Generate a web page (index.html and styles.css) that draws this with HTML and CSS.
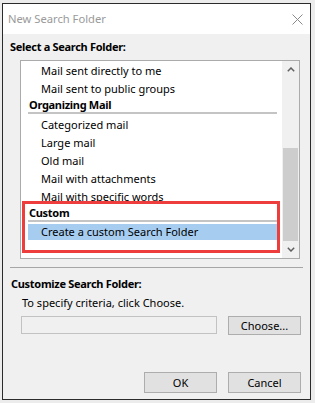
FILE: index.html
```html
<!DOCTYPE html>
<html>
<head>
<meta charset="utf-8">
<link rel="stylesheet" href="styles.css">
</head>
<body>
<div class="window">
  <div class="titlebar">
    <span class="title">New Search Folder</span>
    <svg class="close" width="11" height="11" viewBox="0 0 11 11"><path d="M0.5 0.5 L10.5 10.5 M10.5 0.5 L0.5 10.5" stroke="#8a8a8a" stroke-width="1" fill="none"/></svg>
  </div>
  <div class="content">
    <div class="label bold">Select a Search Folder:</div>
    <div class="list">
      <div class="items">
        <div class="item">Mail sent directly to me</div>
        <div class="item">Mail sent to public groups</div>
        <div class="heading">Organizing Mail</div>
        <div class="item">Categorized mail</div>
        <div class="item">Large mail</div>
        <div class="item">Old mail</div>
        <div class="item">Mail with attachments</div>
        <div class="item">Mail with specific words</div>
        <div class="heading">Custom</div>
        <div class="item selected">Create a custom Search Folder</div>
      </div>
      <div class="scrollbar">
        <div class="sb-btn"><svg width="8" height="5" viewBox="0 0 8 5"><path d="M0.8 4.2 L4 1 L7.2 4.2" stroke="#606060" stroke-width="1.5" fill="none"/></svg></div>
        <div class="sb-track"><div class="sb-thumb"></div></div>
        <div class="sb-btn"><svg width="8" height="5" viewBox="0 0 8 5"><path d="M0.8 0.8 L4 4 L7.2 0.8" stroke="#606060" stroke-width="1.5" fill="none"/></svg></div>
      </div>
      <div class="highlight-box"></div>
    </div>
    <div class="separator"></div>
    <div class="label bold section">Customize Search Folder:</div>
    <div class="hint">To specify criteria, click Choose.</div>
    <div class="choose-row">
      <div class="textbox"></div>
      <div class="button">Choose...</div>
    </div>
    <div class="footer">
      <div class="button">OK</div>
      <div class="button">Cancel</div>
    </div>
  </div>
</div>
</body>
</html>
```

FILE: styles.css
```css
html, body {
  margin: 0;
  padding: 0;
}
body {
  background: #ececec;
  font-family: "Noto Sans", "Open Sans", sans-serif;
  font-size: 11px;
  color: #000;
}
.window {
  margin: 3px 0 0 2px;
  width: 309px;
  height: 397px;
  box-sizing: border-box;
  border: 1px solid #2b2b2b;
  background: #f0f0f0;
  display: flex;
  flex-direction: column;
}
.titlebar {
  height: 30px;
  flex: none;
  background: #fff;
  display: flex;
  align-items: center;
  justify-content: space-between;
  padding: 0 7px 0 5px;
}
.title {
  color: #9a9a9a;
  font-size: 11.2px;
  line-height: 14px;
}
.close {
  display: block;
  margin-top: 1px;
}
.content {
  flex: 1;
  display: flex;
  flex-direction: column;
}
.label {
  line-height: 14px;
  margin: 6px 0 0 7px;
}
.bold {
  font-weight: bold;
  letter-spacing: -0.3px;
}
.list {
  position: relative;
  margin: 6px 0 0 17px;
  width: 280px;
  height: 199px;
  box-sizing: border-box;
  border: 1px solid #ababab;
  background: #fff;
  display: flex;
}
.items {
  flex: 1;
  padding: 1px 5px 0 7px;
  overflow: hidden;
}
.item {
  height: 18px;
  line-height: 18px;
  padding-left: 13px;
  white-space: nowrap;
}
.heading {
  line-height: 14px;
  height: 14px;
  padding-left: 1px;
  font-weight: bold;
  letter-spacing: -0.3px;
  border-bottom: 2px solid #c4c4c4;
  margin-bottom: 2px;
}
.item.selected {
  height: 16px;
  line-height: 16px;
  background: #a6cdf0;
}
.scrollbar {
  width: 17px;
  flex: none;
  background: #f0f0f0;
  display: flex;
  flex-direction: column;
}
.sb-btn {
  height: 17px;
  flex: none;
  display: flex;
  align-items: center;
  justify-content: center;
}
.sb-track {
  flex: 1;
  display: flex;
  flex-direction: column;
  justify-content: flex-end;
}
.sb-thumb {
  height: 93px;
  margin: 0 1px;
  background: #cdcdcd;
}
.highlight-box {
  position: absolute;
  left: 1px;
  top: 140px;
  width: 258px;
  height: 52px;
  box-sizing: border-box;
  border: 3px solid #ee3d3d;
}
.separator {
  margin: 8px 7px 0 7px;
  height: 1px;
  background: #a6a6a6;
}
.section {
  margin: 9px 0 0 8px;
}
.hint {
  line-height: 14px;
  margin: 5px 0 0 19px;
}
.choose-row {
  display: flex;
  margin: 6px 0 0 18px;
  gap: 11px;
}
.textbox {
  width: 196px;
  height: 18px;
  box-sizing: border-box;
  border: 1px solid #c2c2c2;
  background: #f0f0f0;
}
.button {
  width: 73px;
  height: 19px;
  box-sizing: border-box;
  border: 1px solid #adadad;
  background: #e1e1e1;
  display: flex;
  align-items: center;
  justify-content: center;
  line-height: 14px;
}
.footer {
  display: flex;
  justify-content: flex-end;
  gap: 11px;
  margin: 37px 9px 0 0;
}
.footer .button {
  height: 21px;
}
```
